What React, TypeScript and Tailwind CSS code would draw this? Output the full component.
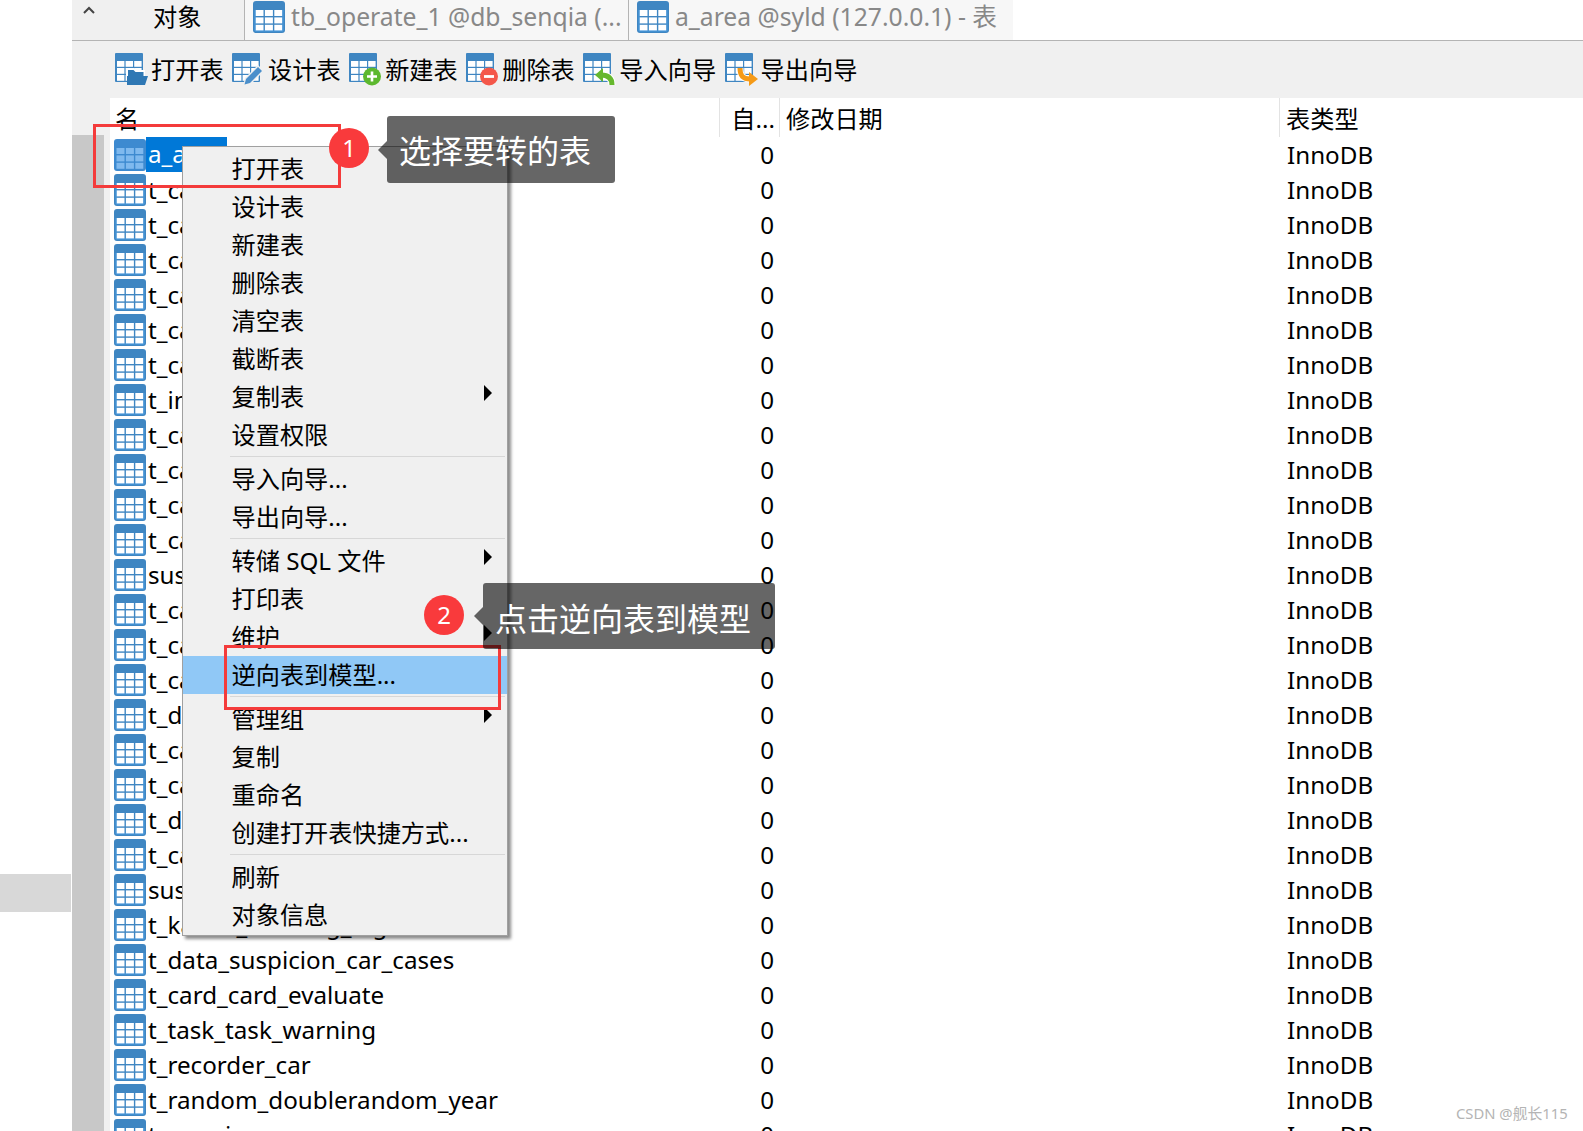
import React from 'react';

const names = [
  'a_area', 't_car_info', 't_car_type', 't_car_brand', 't_car_color', 't_car_owner', 't_card_info', 't_info_log',
  't_case_info', 't_case_type', 't_car_case', 't_case_track', 'suspicion_car', 't_car_warning', 't_card_track',
  't_car_record', 't_data_area', 't_card_type', 't_car_image', 't_data_case', 't_car_pass', 'suspicion_card',
  't_kakou_warning_log', 't_data_suspicion_car_cases', 't_card_card_evaluate', 't_task_task_warning',
  't_recorder_car', 't_random_doublerandom_year', 't_warning_case_car',
];

type Item = { label: string; arrow?: boolean; active?: boolean } | 'sep';

const menu: Item[] = [
  { label: '打开表' }, { label: '设计表' }, { label: '新建表' }, { label: '删除表' }, { label: '清空表' }, { label: '截断表' },
  { label: '复制表', arrow: true }, { label: '设置权限' }, 'sep',
  { label: '导入向导...' }, { label: '导出向导...' }, 'sep',
  { label: '转储 SQL 文件', arrow: true }, { label: '打印表' }, { label: '维护', arrow: true }, { label: '逆向表到模型...', active: true }, 'sep',
  { label: '管理组', arrow: true }, { label: '复制' }, { label: '重命名' }, { label: '创建打开表快捷方式...' }, 'sep',
  { label: '刷新' }, { label: '对象信息' },
];

const TableIcon = ({ selected }: { selected?: boolean }) => (
  <svg viewBox="0 0 32 32" className="w-[32px] h-[32px] shrink-0">
    <rect width="32" height="32" rx="3" fill={selected ? '#3d8ad0' : '#3f86c2'} />
    {[0, 1, 2].map((r) =>
      [0, 1, 2].map((c) => (
        <rect key={`${r}-${c}`} x={2.5 + c * 9.4} y={9 + r * 7.4} width="8" height="6" fill={selected ? '#7fb9ee' : '#ffffff'} />
      )),
    )}
    {!selected && <path d="M2 9v21h28V9" fill="none" stroke="#4a9be0" strokeWidth="1" />}
  </svg>
);

const tools = [
  { label: '打开表', kind: 'open' },
  { label: '设计表', kind: 'design' },
  { label: '新建表', kind: 'add' },
  { label: '删除表', kind: 'del' },
  { label: '导入向导', kind: 'import' },
  { label: '导出向导', kind: 'export' },
];

const ToolIcon = ({ kind }: { kind: string }) => (
  <svg viewBox="0 0 33 33" className="w-[33px] h-[33px] shrink-0">
    <rect x="0" y="0" width="28" height="29" rx="1" fill="#3f86c2" />
    {[0, 1, 2].map((r) =>
      [0, 1, 2].map((c) => (
        <rect key={`${r}-${c}`} x={2 + c * 8.6} y={8 + r * 7} width="7.4" height="5.8" fill="#ffffff" />
      )),
    )}
    {kind === 'open' && (
      <g>
        <path d="M11 15h8l2 2h9v6H11z" fill="#ffffff" />
        <path d="M13 17h5.500l2 2h8v4H13z" fill="#2f78b4" />
        <path d="M12 23h21l-3 9H12z" fill="#2f78b4" />
      </g>
    )}
    {kind === 'design' && (
      <g>
        <path d="M13 25l13-13 6 6-13 13-8 2z" fill="#f0f0f0" />
        <path d="M14 26l12-12 4 4-12 12-5.500 1.500z" fill="#4b8fcb" />
      </g>
    )}
    {kind === 'add' && (
      <g>
        <circle cx="23" cy="23.500" r="9" fill="#5cb82e" />
        <path d="M23 18.500v10M18 23.500h10" stroke="#ffffff" strokeWidth="2.600" />
      </g>
    )}
    {kind === 'del' && (
      <g>
        <circle cx="23" cy="23.500" r="9" fill="#f4574a" />
        <path d="M18 23.500h10" stroke="#ffffff" strokeWidth="2.800" />
      </g>
    )}
    {kind === 'import' && (
      <g>
        <path d="M29 32c0-7-4-10-11-10" fill="none" stroke="#ffffff" strokeWidth="7" />
        <path d="M29 32c0-7-4-10-11-10" fill="none" stroke="#66b82e" strokeWidth="5" />
        <path d="M12 22l8-7v14z" fill="#66b82e" />
      </g>
    )}
    {kind === 'export' && (
      <g>
        <path d="M15 15c0 7 2 11 10 11" fill="none" stroke="#ffffff" strokeWidth="7" />
        <path d="M15 15c0 7 2 11 10 11" fill="none" stroke="#f59a17" strokeWidth="5" />
        <path d="M33 26l-9-7v14z" fill="#f59a17" />
      </g>
    )}
  </svg>
);

const Callout = ({ text, className, inner }: { text: string; className: string; inner: string }) => (
  <div className={`absolute flex items-center ${className}`}>
    <div className="w-0 h-0 border-y-[9px] border-y-transparent border-r-[9px] border-r-black/60" />
    <div className={`h-full flex-1 rounded-[3px] bg-black/60 text-white text-[32px] leading-none flex items-center justify-center pr-[12px] ${inner}`}>{text}</div>
  </div>
);

const Badge = ({ n, className }: { n: number; className: string }) => (
  <div className={`absolute w-[40px] h-[40px] rounded-full bg-[#f93a3c] text-white text-[24px] flex items-center justify-center ${className}`}>{n}</div>
);

export default function App() {
  return (
    <div className="relative w-[1583px] h-[1131px] overflow-hidden bg-white flex text-black text-[24.200px] [font-family:'Noto_Sans','Noto_Sans_CJK_SC',sans-serif]">
      {/* left tree panel */}
      <div className="w-[72px] shrink-0 pt-[874px]">
        <div className="h-[38px] w-[71px] bg-[#d8d8d8]" />
      </div>

      <div className="flex-1 min-w-0 flex flex-col bg-[#f0f0f0]">
        {/* tabs */}
        <div className="h-[41px] shrink-0 flex border-b border-[#b4b4b4] bg-white overflow-hidden">
          <div className="w-[172px] shrink-0 bg-[#f0f0f0] relative flex items-center pl-[81px] h-[40px] pb-[5px]">
            <svg viewBox="0 0 12 8" className="absolute left-[11px] top-[6px] w-[12px] h-[8px]">
              <path d="M1 7l5-5 5 5" fill="none" stroke="#444" strokeWidth="2" />
            </svg>
            对象
          </div>
          <div className="w-[385px] shrink-0 h-[40px] flex items-start gap-[6px] pl-[8px] pt-px border-l border-r border-[#b4b4b4] text-[#888888] bg-[#f7f7f7] text-[24.700px]">
            <TableIcon />
            <span className="leading-[32px] whitespace-nowrap">tb_operate_1 @db_senqia (...</span>
          </div>
          <div className="w-[384px] shrink-0 h-[40px] flex items-start gap-[6px] pl-[8px] pt-px text-[#888888] bg-[#f7f7f7] text-[24.700px]">
            <TableIcon />
            <span className="leading-[32px] whitespace-nowrap">a_area @syld (127.0.0.1) - 表</span>
          </div>
        </div>

        {/* toolbar */}
        <div className="h-[57px] shrink-0 flex items-center gap-[8.500px] pl-[43px] pt-px">
          {tools.map((t) => (
            <div key={t.kind} className="flex items-center gap-[3px]">
              <ToolIcon kind={t.kind} />
              <span className="whitespace-nowrap">{t.label}</span>
            </div>
          ))}
        </div>

        <div className="flex-1 min-h-0 flex">
          {/* scrollbar strip */}
          <div className="w-[38px] shrink-0 flex">
            <div className="w-[32px] mt-[37px] bg-[#c8c8c8]" />
          </div>

          {/* table */}
          <div className="flex-1 min-w-0 bg-white">
            <div className="h-[39px] flex">
              <div className="w-[610px] pl-[5px] leading-[41px] border-r border-[#e3e3e3]">名</div>
              <div className="w-[60px] pr-[4px] text-right leading-[41px] border-r border-[#e3e3e3]">自...</div>
              <div className="w-[500px] pl-[6px] leading-[41px] border-r border-[#e3e3e3]">修改日期</div>
              <div className="pl-[6px] leading-[41px]">表类型</div>
            </div>
            {names.map((name, i) => (
              <div key={name} className="h-[35px] flex items-center leading-[33px]">
                <div className="w-[609px] pl-[4px] flex items-center">
                  <TableIcon selected={i === 0} />
                  <span className={i === 0 ? 'h-[35px] leading-[33px] bg-[#0078d7] text-white pl-[2px] w-[81px]' : 'pl-[2px] whitespace-nowrap'}>{name}</span>
                </div>
                <div className="w-[60px] pr-[5px] text-right">0</div>
                <div className="w-[500px]" />
                <div className="pl-[8px]">InnoDB</div>
              </div>
            ))}
          </div>
        </div>
      </div>

      {/* context menu */}
      <div className="absolute left-[182px] top-[146px] w-[326px] pt-[3px] pb-px bg-[#f0f0f0] border border-[#a0a0a0] shadow-[3px_3px_3px_rgba(0,0,0,0.45)]">
        {menu.map((m, i) =>
          m === 'sep' ? (
            <div key={i} className="h-[6px] pl-[47px] pr-[2px] pt-[2px]">
              <div className="h-px bg-[#d7d7d7]" />
            </div>
          ) : (
            <div key={i} className={`relative h-[38px] pl-[48.500px] leading-[37px] ${m.active ? 'bg-[#90c8f6]' : ''}`}>
              {m.label}
              {m.arrow && <div className="absolute right-[15px] top-[7px] w-0 h-0 border-y-[8px] border-y-transparent border-l-[8px] border-l-black" />}
            </div>
          ),
        )}
      </div>

      {/* annotations */}
      <div className="absolute left-[93px] top-[124px] w-[248px] h-[64px] border-[3px] border-[#f43b3b]" />
      <div className="absolute left-[224px] top-[645px] w-[277px] h-[65px] border-[3px] border-[#f43b3b]" />
      <Badge n={1} className="left-[329px] top-[128px]" />
      <Badge n={2} className="left-[424px] top-[595px]" />
      <Callout text="选择要转的表" inner="pt-[2px]" className="left-[378px] top-[116px] w-[237px] h-[67px]" />
      <Callout text="点击逆向表到模型" inner="pt-[5px]" className="left-[474px] top-[583px] w-[301px] h-[66px]" />

      <div className="absolute left-[1456px] top-[1103px] text-[14.800px] leading-[20px] text-[#b4b4b4] whitespace-nowrap">CSDN @舰长115</div>
    </div>
  );
}
